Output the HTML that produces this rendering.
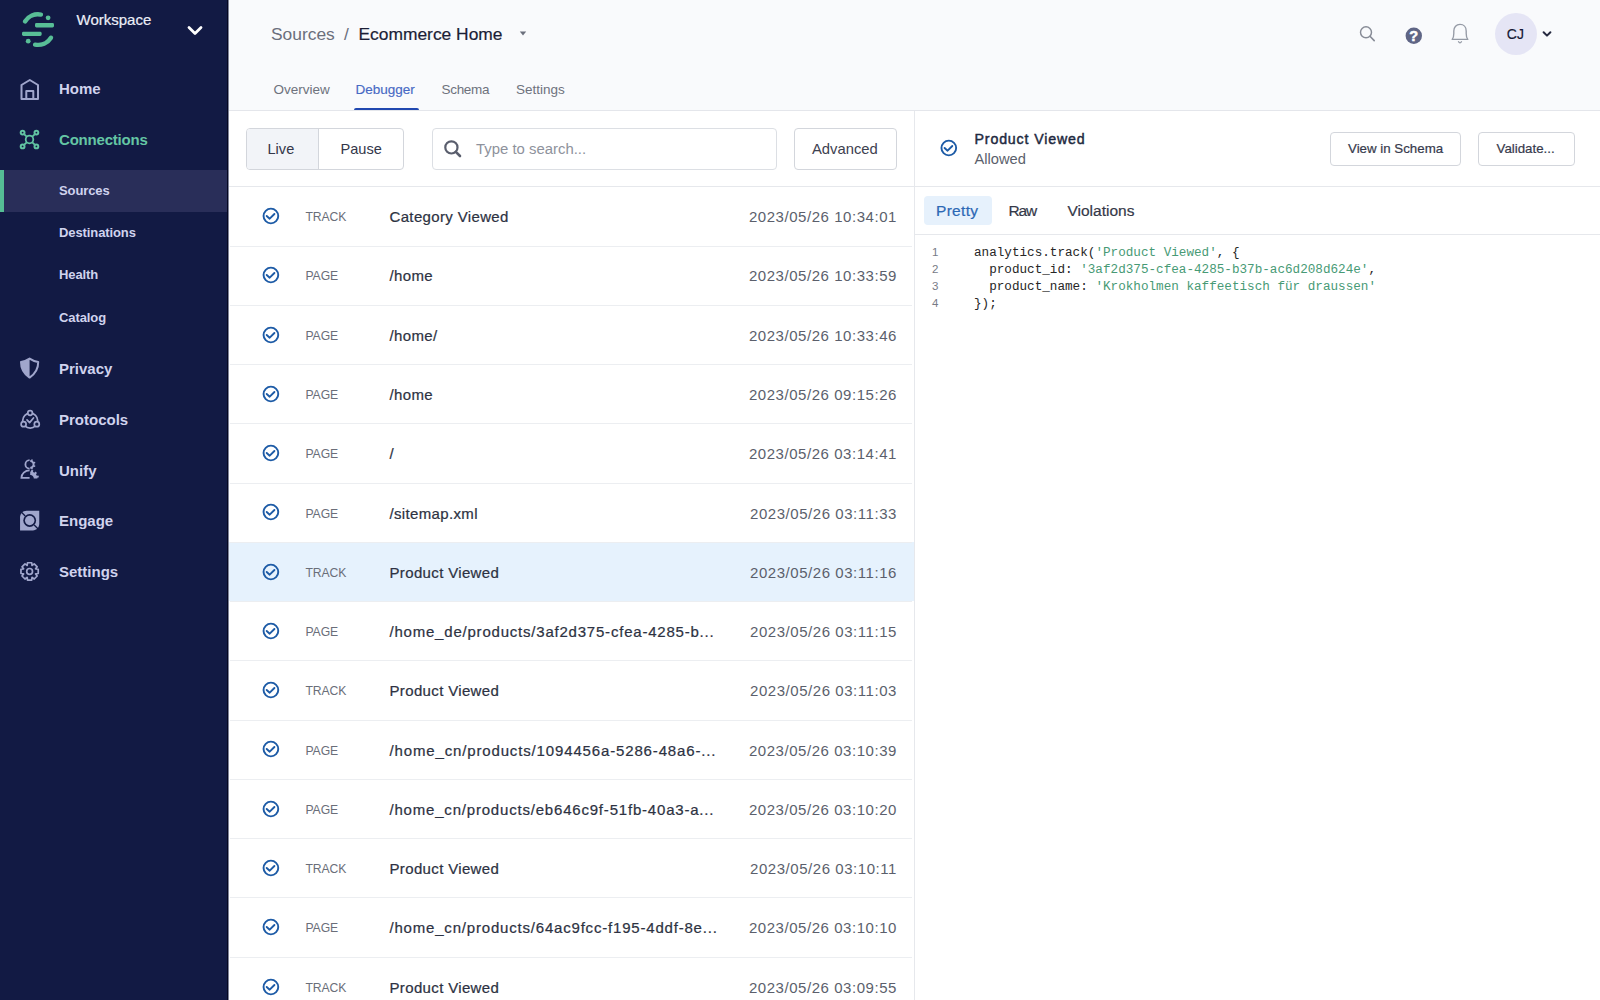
<!DOCTYPE html>
<html><head><meta charset="utf-8">
<style>
*{box-sizing:border-box;margin:0;padding:0}
html,body{width:1600px;height:1000px;overflow:hidden;background:#fff;font-family:"Liberation Sans",sans-serif}
.a{position:absolute;white-space:nowrap}
#sb{position:absolute;left:0;top:0;width:228px;height:1000px;background:#121a44}
#sb .it{position:absolute;left:59px;font-size:15px;font-weight:bold;color:#d0d3ee;line-height:20px}
#sb .sub{position:absolute;left:59px;font-size:13px;font-weight:bold;color:#d0d3ee;line-height:20px;letter-spacing:-0.1px}
#sb svg{position:absolute}
#hdr{position:absolute;left:228px;top:0;width:1372px;height:111px;background:#f9fafc;border-bottom:1px solid #e4e6eb}
.tab{position:absolute;top:79.5px;font-size:13.5px;color:#6e727d;line-height:20px}
.btn{position:absolute;border:1px solid #d3d6dc;border-radius:4px;background:#fff}
.row{position:absolute;left:229px;width:685px;height:59.3px}
.sep{position:absolute;left:230px;width:682px;height:1px;background:#eceef1}
.ck{position:absolute;left:262px}
.ty{position:absolute;left:305.5px;font-size:12.2px;color:#6a6e79;line-height:20px;letter-spacing:-0.1px}
.nm{position:absolute;left:389.5px;font-size:15px;letter-spacing:0.35px;color:#2d3242;line-height:20px;-webkit-text-stroke:0.22px #2d3242}
.ts{position:absolute;right:703px;font-size:15px;color:#5b5f6c;line-height:20px;letter-spacing:0.55px}
.code{position:absolute;white-space:pre;left:974px;font-family:"Liberation Mono",monospace;font-size:12.65px;line-height:17px;color:#262626}
.ln{position:absolute;left:932px;font-size:11.5px;line-height:17px;color:#777b86}
.str{color:#479a75}
</style></head><body>

<div id="sb">
  <!-- logo -->
  <svg style="left:0;top:0" width="80" height="60" viewBox="0 0 80 60">
    <g fill="none" stroke="#58be97" stroke-width="4.4" stroke-linecap="round">
      <path d="M25.02 21.49 A15.3 15.3 0 0 1 40.92 14.58"/>
      <path d="M50.98 37.71 A15.3 15.3 0 0 1 35.08 44.62"/>
    </g>
    <g fill="#58be97">
      <rect x="35" y="23.1" width="19" height="4.4" rx="1.4"/>
      <rect x="22" y="31.8" width="19.6" height="4.2" rx="1.4"/>
      <circle cx="48.1" cy="17.8" r="2.4"/>
      <circle cx="28.2" cy="41.2" r="2.4"/>
    </g>
  </svg>
  <div class="a" style="left:76.5px;top:9.5px;font-size:15px;color:#eceef8;line-height:20px;-webkit-text-stroke:0.2px #eceef8">Workspace</div>
  <svg style="left:186px;top:24px" width="18" height="14" viewBox="0 0 18 14">
    <path d="M3 3.5 L9 9.5 L15 3.5" fill="none" stroke="#fff" stroke-width="2.8" stroke-linecap="round" stroke-linejoin="round"/>
  </svg>

  <!-- home icon -->
  <svg style="left:18px;top:76px" width="24" height="26" viewBox="0 0 24 26">
    <g fill="none" stroke="#a0a6cc" stroke-width="2" stroke-linejoin="round">
      <path d="M3.5 23 V9 L11.8 4 L20 9 V23 Z"/>
      <path d="M8.3 23 V15 H15.3 V23"/>
    </g>
  </svg>
  <div class="it" style="top:79px">Home</div>

  <!-- connections icon -->
  <svg style="left:16px;top:126px" width="28" height="28" viewBox="0 0 28 28">
    <g fill="none" stroke="#62c5a3" stroke-width="1.8">
      <circle cx="6.6" cy="6.6" r="1.9" stroke-width="2"/>
      <circle cx="20.4" cy="6.6" r="1.9" stroke-width="2"/>
      <circle cx="6.6" cy="20.4" r="1.9" stroke-width="2"/>
      <circle cx="20.4" cy="20.4" r="1.9" stroke-width="2"/>
      <circle cx="13.5" cy="13.5" r="3.8"/>
      <path d="M8.3 8.3 L10.7 10.7 M18.7 8.3 L16.3 10.7 M8.3 18.7 L10.7 16.3 M18.7 18.7 L16.3 16.3"/>
    </g>
  </svg>
  <div class="it" style="top:129.5px;color:#64c6a4;letter-spacing:-0.2px">Connections</div>

  <div style="position:absolute;left:0;top:170px;width:228px;height:41.5px;background:#292e59"></div>
  <div style="position:absolute;left:0;top:170px;width:4px;height:41.5px;background:#55bd95"></div>
  <div class="sub" style="top:180.5px">Sources</div>
  <div class="sub" style="top:223px">Destinations</div>
  <div class="sub" style="top:265px">Health</div>
  <div class="sub" style="top:307.5px">Catalog</div>

  <!-- privacy -->
  <svg style="left:16px;top:354px" width="28" height="28" viewBox="0 0 28 28">
    <path d="M13.6 4.6 C10.9 6.4 8.2 7.5 5.0 8.0 C4.9 14.6 7.7 19.6 13.6 23.6 C19.5 19.6 22.3 14.6 22.2 8.0 C19.0 7.5 16.3 6.4 13.6 4.6 Z" fill="none" stroke="#a0a6cc" stroke-width="2" stroke-linejoin="round"/>
    <path d="M13.6 4.6 C10.9 6.4 8.2 7.5 5.0 8.0 C4.9 14.6 7.7 19.6 13.6 23.6 Z" fill="#a0a6cc"/>
  </svg>
  <div class="it" style="top:358.6px">Privacy</div>

  <!-- protocols -->
  <svg style="left:0;top:400px" width="60" height="40" viewBox="0 400 60 40">
    <g stroke="#a0a6cc" stroke-width="1.7">
      <circle cx="30.2" cy="420.6" r="7.5" fill="none"/>
      <circle cx="30.1" cy="413" r="2.3" fill="#121a44"/>
      <circle cx="23.6" cy="424.2" r="2.5" fill="#121a44"/>
      <circle cx="36.8" cy="424.2" r="2.5" fill="#121a44"/>
      <path d="M27 419.8 L29.6 422.6 L33.5 418" fill="none" stroke-linecap="round" stroke-linejoin="round"/>
    </g>
  </svg>
  <div class="it" style="top:409.6px">Protocols</div>

  <!-- unify --><!--icons-->
  <svg style="left:0;top:440px" width="60" height="60" viewBox="0 440 60 60">
    <g fill="none" stroke="#a0a6cc" stroke-width="1.8">
      <path d="M29.6 460.2 A4.2 4.2 0 0 0 29.6 468.6"/>
      <path d="M29.6 470.4 C25 470.4 21.4 473.8 21.4 477.9 H29.6"/>
    </g>
    <g fill="#a0a6cc"><path d="M30.20 460.10 L30.48 460.11 L30.76 460.14 L31.04 460.18 L31.60 459.18 L31.94 459.29 L32.27 459.41 L32.59 459.56 L32.90 459.72 L32.59 460.82 L32.82 460.99 L33.04 461.17 L33.24 461.36 L33.43 461.56 L33.61 461.78 L33.78 462.01 L34.88 461.70 L35.04 462.01 L35.19 462.33 L35.31 462.66 L35.42 463.00 L34.42 463.56 L34.46 463.84 L34.49 464.12 L34.50 464.40 L34.49 464.68 L34.46 464.96 L34.42 465.24 L35.42 465.80 L35.31 466.14 L35.19 466.47 L35.04 466.79 L34.88 467.10 L33.78 466.79 L33.61 467.02 L33.43 467.24 L33.24 467.44 L33.04 467.63 L32.82 467.81 L32.59 467.98 L32.90 469.08 L32.59 469.24 L32.27 469.39 L31.94 469.51 L31.60 469.62 L31.04 468.62 L30.76 468.66 L30.48 468.69 L30.20 468.70 L30.20 466.80 L30.36 466.79 L30.51 466.78 L30.67 466.75 L30.82 466.72 L30.97 466.67 L31.12 466.62 L31.26 466.55 L31.40 466.48 L31.53 466.40 L31.66 466.30 L31.78 466.20 L31.90 466.10 L32.00 465.98 L32.10 465.86 L32.20 465.73 L32.28 465.60 L32.35 465.46 L32.42 465.32 L32.47 465.17 L32.52 465.02 L32.55 464.87 L32.58 464.71 L32.59 464.56 L32.60 464.40 L32.59 464.24 L32.58 464.09 L32.55 463.93 L32.52 463.78 L32.47 463.63 L32.42 463.48 L32.35 463.34 L32.28 463.20 L32.20 463.07 L32.10 462.94 L32.00 462.82 L31.90 462.70 L31.78 462.60 L31.66 462.50 L31.53 462.40 L31.40 462.32 L31.26 462.25 L31.12 462.18 L30.97 462.13 L30.82 462.08 L30.67 462.05 L30.51 462.02 L30.36 462.01 L30.20 462.00 Z"/><path d="M30.20 471.40 L30.44 471.40 L30.67 471.42 L30.91 471.43 L31.35 469.88 L31.63 469.92 L31.92 469.97 L32.20 470.03 L32.48 470.10 L32.75 470.18 L33.03 470.27 L33.30 470.36 L32.96 471.95 L33.17 472.04 L33.38 472.14 L33.59 472.25 L33.80 472.36 L34.00 472.49 L34.20 472.61 L34.39 472.75 L35.56 471.62 L35.78 471.80 L36.00 471.98 L36.22 472.18 L36.42 472.38 L36.62 472.58 L36.82 472.80 L37.00 473.02 L35.91 474.22 L36.05 474.41 L36.19 474.60 L36.31 474.80 L36.44 475.00 L36.55 475.21 L36.66 475.42 L36.76 475.63 L36.85 475.84 L38.44 475.50 L38.53 475.77 L38.62 476.05 L38.70 476.32 L38.77 476.60 L38.83 476.88 L38.88 477.17 L37.34 477.66 L37.37 477.89 L37.38 478.13 L37.40 478.36 L37.40 478.60 L33.80 478.60 L33.80 478.48 L33.79 478.36 L33.78 478.25 L33.77 478.13 L33.75 478.01 L33.73 477.90 L33.71 477.78 L33.68 477.67 L33.64 477.55 L33.61 477.44 L33.57 477.33 L33.53 477.22 L33.48 477.11 L33.43 477.01 L33.37 476.90 L33.32 476.80 L33.26 476.70 L33.19 476.60 L33.13 476.50 L33.06 476.41 L32.98 476.32 L32.91 476.23 L32.83 476.14 L32.75 476.05 L32.66 475.97 L32.57 475.89 L32.48 475.82 L32.39 475.74 L32.30 475.67 L32.20 475.61 L32.10 475.54 L32.00 475.48 L31.90 475.43 L31.79 475.37 L31.69 475.32 L31.58 475.27 L31.47 475.23 L31.36 475.19 L31.25 475.16 L31.13 475.12 L31.02 475.09 L30.90 475.07 L30.79 475.05 L30.67 475.03 L30.55 475.02 L30.44 475.01 L30.32 475.00 L30.20 475.00 Z"/></g>
  </svg>
  <svg style="left:0;top:490px" width="60" height="60" viewBox="0 490 60 60">
    <path d="M26.6 510.8 H39.25 V523.6 C39.25 527.6 36.6 530.4 32.8 530.4 H20.06 V517.6 C20.06 513.6 22.8 510.8 26.6 510.8 Z" fill="#a0a6cc"/>
    <circle cx="29.7" cy="520.5" r="6.4" fill="#121a44"/>
    <circle cx="29.7" cy="520.5" r="4.75" fill="#a0a6cc"/>
    <path d="M25.2 516 L21 511.8 M34.2 525 L38.4 529.2" stroke="#121a44" stroke-width="1.3"/>
  </svg>
<!--/icons-->
  <div class="it" style="top:460.6px">Unify</div>

  <!-- engage -->
  <div class="it" style="top:511.1px">Engage</div>

  <!-- settings -->
  <svg style="left:16px;top:558px" width="28" height="28" viewBox="0 0 28 28">
    <g fill="none" stroke="#a0a6cc" stroke-width="1.7" stroke-linejoin="round">
      <path id="gear" d="M11.19 7.36 L11.48 4.76 L15.72 4.76 L16.01 7.36 L16.16 7.43 L18.22 5.79 L21.21 8.78 L19.57 10.84 L19.64 10.99 L22.24 11.28 L22.24 15.52 L19.64 15.81 L19.57 15.96 L21.21 18.02 L18.22 21.01 L16.16 19.37 L16.01 19.44 L15.72 22.04 L11.48 22.04 L11.19 19.44 L11.04 19.37 L8.98 21.01 L5.99 18.02 L7.63 15.96 L7.56 15.81 L4.96 15.52 L4.96 11.28 L7.56 10.99 L7.63 10.84 L5.99 8.78 L8.98 5.79 L11.04 7.43 Z"/>
      <circle cx="13.6" cy="13.4" r="2.9"/>
    </g>
  </svg>
  <div class="it" style="top:561.6px">Settings</div>
</div>


<!-- header -->
<div id="hdr"></div>
<div class="a" style="left:271px;top:24px;font-size:17.4px;color:#6b6f7c;line-height:20px">Sources</div>
<div class="a" style="left:344px;top:24px;font-size:17.4px;color:#6b6f7c;line-height:20px">/</div>
<div class="a" style="left:358.5px;top:24px;font-size:17.4px;color:#1b1e36;line-height:20px;-webkit-text-stroke:0.2px #1b1e36">Ecommerce Home</div>
<svg class="a" style="left:517px;top:30px" width="12" height="8" viewBox="0 0 12 8"><path d="M2.8 1.6 H9.2 L6 5.6 Z" fill="#6b6f7c"/></svg>

<div class="tab" style="left:273.5px">Overview</div>
<div class="tab" style="left:355.5px;color:#4769c4;-webkit-text-stroke:0.15px #4769c4">Debugger</div>
<div class="tab" style="left:441.5px;letter-spacing:-0.3px">Schema</div>
<div class="tab" style="left:516px">Settings</div>
<div class="a" style="left:353.5px;top:107.8px;width:65px;height:2.4px;background:#2148b0;border-radius:2px 2px 0 0"></div>

<!-- header icons -->
<svg class="a" style="left:1356px;top:22px" width="22" height="22" viewBox="0 0 22 22">
  <circle cx="10" cy="10.3" r="5.5" fill="none" stroke="#878b96" stroke-width="1.45"/>
  <path d="M14 14.3 L18.2 18.6" stroke="#878b96" stroke-width="1.6" stroke-linecap="round"/>
</svg>
<svg class="a" style="left:1403px;top:25px" width="22" height="22" viewBox="0 0 22 22">
  <circle cx="10.8" cy="10.7" r="8.2" fill="#5f6585"/>
  <text x="10.8" y="15.6" text-anchor="middle" font-family="Liberation Sans" font-weight="bold" font-size="14.5" fill="#fff" stroke="#fff" stroke-width="0.5">?</text>
</svg>
<svg class="a" style="left:1449px;top:22px" width="22" height="24" viewBox="0 0 22 24">
  <path d="M3.2 17.4 C4.6 15.8 4.8 14 4.8 11.5 V9 C4.8 5 7.3 2.4 11 2.4 C14.7 2.4 17.2 5 17.2 9 V11.5 C17.2 14 17.4 15.8 18.8 17.4 Z" fill="none" stroke="#959aa5" stroke-width="1.35" stroke-linejoin="round"/>
  <path d="M9.3 19.2 Q11 22.4 12.7 19.2" fill="none" stroke="#959aa5" stroke-width="1.3"/>
</svg>
<div class="a" style="left:1494.5px;top:12.5px;width:42px;height:42px;border-radius:50%;background:#e5e5f5"></div>
<div class="a" style="left:1494.5px;top:23.5px;width:42px;text-align:center;font-size:14px;color:#151834;line-height:20px;-webkit-text-stroke:0.15px #151834;letter-spacing:0.3px">CJ</div>
<svg class="a" style="left:1540px;top:28px" width="14" height="12" viewBox="0 0 14 12"><path d="M3.6 4.2 L7 7.6 L10.4 4.2" fill="none" stroke="#262a40" stroke-width="2" stroke-linecap="round" stroke-linejoin="round"/></svg>

<!-- divider vertical -->
<div class="a" style="left:914px;top:111px;width:1px;height:889px;background:#e6e8ec"></div>

<!-- toolbar -->
<div class="btn" style="left:245.5px;top:127.5px;width:158.5px;height:42.5px;overflow:hidden">
  <div style="position:absolute;left:0;top:0;width:72px;height:100%;background:#f2f4f8;border-right:1px solid #d3d6dc"></div>
</div>
<div class="a" style="left:267.5px;top:138.5px;font-size:14.6px;color:#33374a;line-height:20px">Live</div>
<div class="a" style="left:340.5px;top:138.5px;font-size:14.6px;color:#33374a;line-height:20px">Pause</div>

<div class="btn" style="left:431.5px;top:127.5px;width:345px;height:42.5px;border-color:#dcdfe4"></div>
<svg class="a" style="left:441px;top:137px" width="24" height="24" viewBox="0 0 24 24">
  <circle cx="10.4" cy="10.4" r="6.1" fill="none" stroke="#5a5e6d" stroke-width="2.2"/>
  <path d="M14.8 14.8 L19 19" stroke="#5a5e6d" stroke-width="2.6" stroke-linecap="round"/>
</svg>
<div class="a" style="left:476px;top:139px;font-size:14.9px;color:#8e929c;line-height:20px">Type to search...</div>

<div class="btn" style="left:793.5px;top:127.5px;width:103.5px;height:42.5px"></div>
<div class="a" style="left:812px;top:138.5px;font-size:14.8px;color:#3d4150;line-height:20px">Advanced</div>

<div class="a" style="left:229px;top:186px;width:685px;height:1px;background:#e6e8ec"></div>

<div id="rows"><svg class="ck" style="top:205.0px" width="22" height="22" viewBox="0 0 22 22"><circle cx="8.9" cy="11" r="7.35" fill="none" stroke="#1d5ba6" stroke-width="1.9"/><path d="M4.7 11 L7.7 13.7 L12.4 9" fill="none" stroke="#1d5ba6" stroke-width="1.9" stroke-linecap="round" stroke-linejoin="round"/></svg>
<div class="ty" style="top:207.1px">TRACK</div>
<div class="nm" style="top:207.1px">Category Viewed</div>
<div class="ts" style="top:207.1px">2023/05/26 10:34:01</div>
<div class="sep" style="top:245.5px"></div>
<svg class="ck" style="top:264.3px" width="22" height="22" viewBox="0 0 22 22"><circle cx="8.9" cy="11" r="7.35" fill="none" stroke="#1d5ba6" stroke-width="1.9"/><path d="M4.7 11 L7.7 13.7 L12.4 9" fill="none" stroke="#1d5ba6" stroke-width="1.9" stroke-linecap="round" stroke-linejoin="round"/></svg>
<div class="ty" style="top:266.4px">PAGE</div>
<div class="nm" style="top:266.4px">/home</div>
<div class="ts" style="top:266.4px">2023/05/26 10:33:59</div>
<div class="sep" style="top:304.7px"></div>
<svg class="ck" style="top:323.5px" width="22" height="22" viewBox="0 0 22 22"><circle cx="8.9" cy="11" r="7.35" fill="none" stroke="#1d5ba6" stroke-width="1.9"/><path d="M4.7 11 L7.7 13.7 L12.4 9" fill="none" stroke="#1d5ba6" stroke-width="1.9" stroke-linecap="round" stroke-linejoin="round"/></svg>
<div class="ty" style="top:325.6px">PAGE</div>
<div class="nm" style="top:325.6px">/home/</div>
<div class="ts" style="top:325.6px">2023/05/26 10:33:46</div>
<div class="sep" style="top:364.0px"></div>
<svg class="ck" style="top:382.8px" width="22" height="22" viewBox="0 0 22 22"><circle cx="8.9" cy="11" r="7.35" fill="none" stroke="#1d5ba6" stroke-width="1.9"/><path d="M4.7 11 L7.7 13.7 L12.4 9" fill="none" stroke="#1d5ba6" stroke-width="1.9" stroke-linecap="round" stroke-linejoin="round"/></svg>
<div class="ty" style="top:384.9px">PAGE</div>
<div class="nm" style="top:384.9px">/home</div>
<div class="ts" style="top:384.9px">2023/05/26 09:15:26</div>
<div class="sep" style="top:423.3px"></div>
<svg class="ck" style="top:442.1px" width="22" height="22" viewBox="0 0 22 22"><circle cx="8.9" cy="11" r="7.35" fill="none" stroke="#1d5ba6" stroke-width="1.9"/><path d="M4.7 11 L7.7 13.7 L12.4 9" fill="none" stroke="#1d5ba6" stroke-width="1.9" stroke-linecap="round" stroke-linejoin="round"/></svg>
<div class="ty" style="top:444.2px">PAGE</div>
<div class="nm" style="top:444.2px">/</div>
<div class="ts" style="top:444.2px">2023/05/26 03:14:41</div>
<div class="sep" style="top:482.6px"></div>
<svg class="ck" style="top:501.4px" width="22" height="22" viewBox="0 0 22 22"><circle cx="8.9" cy="11" r="7.35" fill="none" stroke="#1d5ba6" stroke-width="1.9"/><path d="M4.7 11 L7.7 13.7 L12.4 9" fill="none" stroke="#1d5ba6" stroke-width="1.9" stroke-linecap="round" stroke-linejoin="round"/></svg>
<div class="ty" style="top:503.5px">PAGE</div>
<div class="nm" style="top:503.5px">/sitemap.xml</div>
<div class="ts" style="top:503.5px">2023/05/26 03:11:33</div>
<div class="a" style="left:229px;top:542.1px;width:685px;height:59.3px;background:#e6f2fd"></div>
<div class="sep" style="top:541.8px"></div>
<svg class="ck" style="top:560.6px" width="22" height="22" viewBox="0 0 22 22"><circle cx="8.9" cy="11" r="7.35" fill="none" stroke="#1d5ba6" stroke-width="1.9"/><path d="M4.7 11 L7.7 13.7 L12.4 9" fill="none" stroke="#1d5ba6" stroke-width="1.9" stroke-linecap="round" stroke-linejoin="round"/></svg>
<div class="ty" style="top:562.7px">TRACK</div>
<div class="nm" style="top:562.7px">Product Viewed</div>
<div class="ts" style="top:562.7px">2023/05/26 03:11:16</div>
<div class="sep" style="top:601.1px"></div>
<svg class="ck" style="top:619.9px" width="22" height="22" viewBox="0 0 22 22"><circle cx="8.9" cy="11" r="7.35" fill="none" stroke="#1d5ba6" stroke-width="1.9"/><path d="M4.7 11 L7.7 13.7 L12.4 9" fill="none" stroke="#1d5ba6" stroke-width="1.9" stroke-linecap="round" stroke-linejoin="round"/></svg>
<div class="ty" style="top:622.0px">PAGE</div>
<div class="nm" style="top:622.0px;letter-spacing:0.787px">/home_de/products/3af2d375-cfea-4285-b...</div>
<div class="ts" style="top:622.0px">2023/05/26 03:11:15</div>
<div class="sep" style="top:660.4px"></div>
<svg class="ck" style="top:679.2px" width="22" height="22" viewBox="0 0 22 22"><circle cx="8.9" cy="11" r="7.35" fill="none" stroke="#1d5ba6" stroke-width="1.9"/><path d="M4.7 11 L7.7 13.7 L12.4 9" fill="none" stroke="#1d5ba6" stroke-width="1.9" stroke-linecap="round" stroke-linejoin="round"/></svg>
<div class="ty" style="top:681.3px">TRACK</div>
<div class="nm" style="top:681.3px">Product Viewed</div>
<div class="ts" style="top:681.3px">2023/05/26 03:11:03</div>
<div class="sep" style="top:719.6px"></div>
<svg class="ck" style="top:738.4px" width="22" height="22" viewBox="0 0 22 22"><circle cx="8.9" cy="11" r="7.35" fill="none" stroke="#1d5ba6" stroke-width="1.9"/><path d="M4.7 11 L7.7 13.7 L12.4 9" fill="none" stroke="#1d5ba6" stroke-width="1.9" stroke-linecap="round" stroke-linejoin="round"/></svg>
<div class="ty" style="top:740.5px">PAGE</div>
<div class="nm" style="top:740.5px;letter-spacing:0.853px">/home_cn/products/1094456a-5286-48a6-...</div>
<div class="ts" style="top:740.5px">2023/05/26 03:10:39</div>
<div class="sep" style="top:778.9px"></div>
<svg class="ck" style="top:797.7px" width="22" height="22" viewBox="0 0 22 22"><circle cx="8.9" cy="11" r="7.35" fill="none" stroke="#1d5ba6" stroke-width="1.9"/><path d="M4.7 11 L7.7 13.7 L12.4 9" fill="none" stroke="#1d5ba6" stroke-width="1.9" stroke-linecap="round" stroke-linejoin="round"/></svg>
<div class="ty" style="top:799.8px">PAGE</div>
<div class="nm" style="top:799.8px;letter-spacing:0.803px">/home_cn/products/eb646c9f-51fb-40a3-a...</div>
<div class="ts" style="top:799.8px">2023/05/26 03:10:20</div>
<div class="sep" style="top:838.2px"></div>
<svg class="ck" style="top:857.0px" width="22" height="22" viewBox="0 0 22 22"><circle cx="8.9" cy="11" r="7.35" fill="none" stroke="#1d5ba6" stroke-width="1.9"/><path d="M4.7 11 L7.7 13.7 L12.4 9" fill="none" stroke="#1d5ba6" stroke-width="1.9" stroke-linecap="round" stroke-linejoin="round"/></svg>
<div class="ty" style="top:859.1px">TRACK</div>
<div class="nm" style="top:859.1px">Product Viewed</div>
<div class="ts" style="top:859.1px">2023/05/26 03:10:11</div>
<div class="sep" style="top:897.4px"></div>
<svg class="ck" style="top:916.2px" width="22" height="22" viewBox="0 0 22 22"><circle cx="8.9" cy="11" r="7.35" fill="none" stroke="#1d5ba6" stroke-width="1.9"/><path d="M4.7 11 L7.7 13.7 L12.4 9" fill="none" stroke="#1d5ba6" stroke-width="1.9" stroke-linecap="round" stroke-linejoin="round"/></svg>
<div class="ty" style="top:918.3px">PAGE</div>
<div class="nm" style="top:918.3px;letter-spacing:0.806px">/home_cn/products/64ac9fcc-f195-4ddf-8e...</div>
<div class="ts" style="top:918.3px">2023/05/26 03:10:10</div>
<div class="sep" style="top:956.7px"></div>
<svg class="ck" style="top:975.5px" width="22" height="22" viewBox="0 0 22 22"><circle cx="8.9" cy="11" r="7.35" fill="none" stroke="#1d5ba6" stroke-width="1.9"/><path d="M4.7 11 L7.7 13.7 L12.4 9" fill="none" stroke="#1d5ba6" stroke-width="1.9" stroke-linecap="round" stroke-linejoin="round"/></svg>
<div class="ty" style="top:977.6px">TRACK</div>
<div class="nm" style="top:977.6px">Product Viewed</div>
<div class="ts" style="top:977.6px">2023/05/26 03:09:55</div></div><!--/rows-->

<!-- right panel -->
<svg class="a" style="left:938px;top:138px" width="22" height="22" viewBox="0 0 22 22">
  <circle cx="10.8" cy="10" r="7.35" fill="none" stroke="#1d5ba6" stroke-width="1.9"/>
  <path d="M6.6 10 L9.6 12.7 L14.3 8" fill="none" stroke="#1d5ba6" stroke-width="1.9" stroke-linecap="round" stroke-linejoin="round"/>
</svg>
<div class="a" style="left:974.5px;top:128.5px;font-size:14.2px;letter-spacing:0.85px;color:#1e2940;line-height:20px;-webkit-text-stroke:0.45px #1e2940">Product Viewed</div>
<div class="a" style="left:974.5px;top:149px;font-size:14.7px;color:#5b5f6c;line-height:20px">Allowed</div>

<div class="btn" style="left:1329.5px;top:132px;width:131.5px;height:33.5px"></div>
<div class="a" style="left:1348px;top:139px;font-size:13.3px;color:#363a4c;line-height:20px;-webkit-text-stroke:0.2px #363a4c">View in Schema</div>
<div class="btn" style="left:1478px;top:132px;width:96.5px;height:33.5px"></div>
<div class="a" style="left:1496.5px;top:139px;font-size:13.3px;color:#363a4c;line-height:20px;-webkit-text-stroke:0.2px #363a4c">Validate...</div>

<div class="a" style="left:915px;top:186px;width:685px;height:1px;background:#e6e8ec"></div>

<div class="a" style="left:923.5px;top:196px;width:68px;height:29px;background:#e6f1fc;border-radius:4px"></div>
<div class="a" style="left:936px;top:200.5px;font-size:15.5px;color:#2c68b5;line-height:20px;-webkit-text-stroke:0.2px #2c68b5;letter-spacing:0.3px">Pretty</div>
<div class="a" style="left:1008.5px;top:200.5px;font-size:15.5px;color:#343848;line-height:20px;-webkit-text-stroke:0.2px #343848;letter-spacing:-1.2px">Raw</div>
<div class="a" style="left:1067.5px;top:200.5px;font-size:15.5px;color:#343848;line-height:20px;-webkit-text-stroke:0.2px #343848">Violations</div>

<div class="a" style="left:915px;top:234px;width:685px;height:1px;background:#e6e8ec"></div>

<div class="ln" style="top:243.5px">1</div>
<div class="ln" style="top:260.5px">2</div>
<div class="ln" style="top:277.5px">3</div>
<div class="ln" style="top:294.5px">4</div>
<div class="code" style="top:244.2px">analytics.track(<span class="str">'Product Viewed'</span>, {</div>
<div class="code" style="top:261.2px">  product_id: <span class="str">'3af2d375-cfea-4285-b37b-ac6d208d624e'</span>,</div>
<div class="code" style="top:278.2px">  product_name: <span class="str">'Krokholmen kaffeetisch für draussen'</span></div>
<div class="code" style="top:295.2px">});</div>

<div style="position:absolute;left:227px;top:0;width:1px;height:1000px;background:#050822"></div><div style="position:absolute;left:228px;top:0;width:1px;height:1000px;background:#80849a"></div>
</body></html>
